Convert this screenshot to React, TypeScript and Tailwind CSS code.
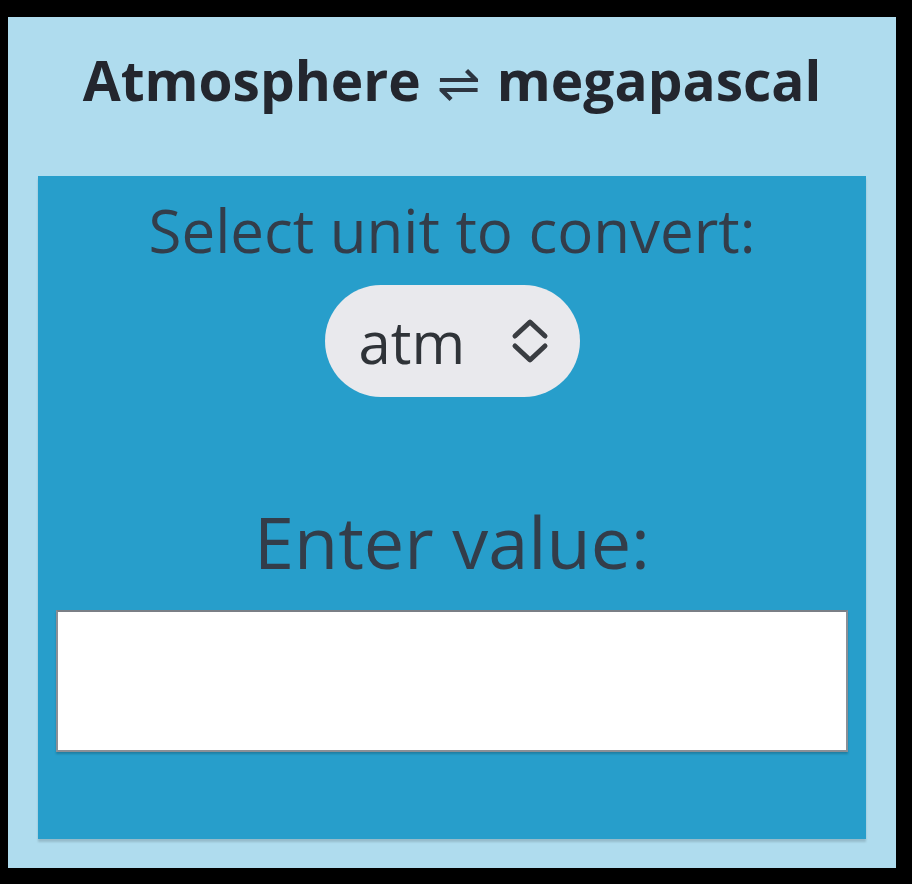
export default function App() {
  return (
    <div className="h-[884px] w-[912px] bg-black pt-[17px] pr-[16px] pb-[16px] pl-[8px] font-['Open_Sans',sans-serif]">
      <div className="flex h-full flex-col bg-[#afdcee] px-[30px]">
        <h1 className="flex h-[159px] items-center justify-center gap-[16px] pb-[32px] text-[55px] font-bold text-[#23262e]">
          <span>Atmosphere</span>
          <span className="text-[52px] font-light text-[#2d3540]">⇌</span>
          <span>megapascal</span>
        </h1>

        <div className="flex h-[663px] flex-col items-center bg-[#279ecb] px-[18px] shadow-[0_3px_2px_rgba(0,0,0,0.15)]">
          <label className="mt-[16px] text-[60px] leading-[76px] text-[#333d4a]">Select unit to convert:</label>

          <div className="mt-[17px] flex h-[112px] w-[255px] items-center justify-between rounded-full bg-[#e9e9ed] pl-[34px] pr-[30px]">
            <span className="text-[58px] text-[#2f3338]">atm</span>
            <svg width="40" height="46" viewBox="0 0 40 46" fill="none" stroke="#3a3d42" strokeWidth="5" strokeLinecap="round" strokeLinejoin="round">
              <path d="M5 18 L20 4 L35 18" />
              <path d="M5 28 L20 42 L35 28" />
            </svg>
          </div>

          <label className="mt-[100px] text-[72px] leading-[88px] text-[#333d4a]">Enter value:</label>

          <input
            type="text"
            className="mt-[25px] h-[142px] w-full border-2 border-[#8a8f96] border-t-[#7a7f86] bg-white shadow-[0_2px_2px_rgba(0,0,0,0.2)] outline-none"
          />
        </div>
      </div>
    </div>
  );
}
